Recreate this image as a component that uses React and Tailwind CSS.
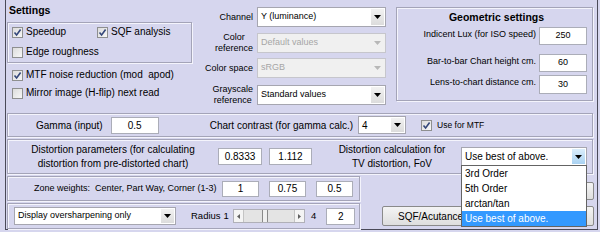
import React from 'react'

const FONT = "font-['Liberation_Sans',Arial,sans-serif]"

function Check({ checked = false }) {
  return (
    <span className="flex h-[11px] w-[11px] shrink-0 items-center justify-center border border-[#8e8f8f] bg-gradient-to-br from-[#dcdcdc] to-[#f7f7f7]">
      {checked && (
        <svg width="9" height="9" viewBox="0 0 9 9">
          <path d="M1.5 4.5 L3.6 7 L7.6 1.5" fill="none" stroke="#34477a" strokeWidth="1.6" />
        </svg>
      )}
    </span>
  )
}

function CheckRow({ checked, label, className = '' }) {
  return (
    <div className={`flex h-[12px] items-center gap-[3px] ${className}`}>
      <Check checked={checked} />
      <span className="leading-[12px] whitespace-nowrap">{label}</span>
    </div>
  )
}

function Arrow({ disabled = false, active = false }) {
  return (
    <span
      className={`flex h-full w-[13px] shrink-0 items-center justify-center ${
        active ? 'bg-gradient-to-b from-[#dbeefc] to-[#a9d2f2]' : disabled ? '' : 'bg-gradient-to-b from-[#f2f2f2] to-[#dcdcdc]'
      }`}
    >
      <svg width="7" height="4" viewBox="0 0 7 4">
        <path d="M0 0 H7 L3.5 4 Z" fill={disabled ? '#b8b8b8' : '#000'} />
      </svg>
    </span>
  )
}

function Select({ value, w, h = 'h-[20px]', disabled = false, active = false, text = 'text-[9px]' }) {
  return (
    <div
      className={`flex ${h} ${w} shrink-0 items-stretch border p-[1px] ${
        disabled ? 'border-[#c6c6cc] bg-[#f0f0f0] text-[#a6a6a6]' : 'border-[#a6a6b0] bg-white text-black'
      } ${active ? 'border-[#5a9ad6]' : ''}`}
    >
      <span className={`flex flex-1 items-center pl-[2px] ${text} whitespace-nowrap overflow-hidden`}>{value}</span>
      <Arrow disabled={disabled} active={active} />
    </div>
  )
}

function Field({ value, w, h = 'h-[18px]' }) {
  return (
    <div className={`flex ${h} ${w} shrink-0 items-center justify-center border border-[#abadb8] bg-white`}>
      {value}
    </div>
  )
}

const BOX = 'border border-[#a4a4b8] shadow-[inset_1px_1px_0_#f4f4fc,1px_1px_0_#f4f4fc]'

function LabelRow({ label, children, mt }) {
  return (
    <div className={`flex items-center ${mt}`}>
      <div className="flex w-[61px] justify-end">
        <span className="text-center leading-[11px]">{label}</span>
      </div>
      <div className="ml-[4px]">{children}</div>
    </div>
  )
}

export default function App() {
  return (
    <div className={`relative h-[232px] w-[600px] overflow-hidden bg-[#d6d6ee] text-[10px] text-black ${FONT}`}>
      <div className="ml-[5px] h-[230px] w-[593px] border-b border-l border-r border-[#4a4a58] pl-[1px] pr-[4px]">
        {/* top section */}
        <div className="flex h-[113px]">
          <div className="w-[185px]">
            <div className="h-[22px] pl-[2px] pt-[4px] text-[10.5px] font-bold leading-[13px]">Settings</div>
            <div className={`flex h-[41px] flex-col gap-[8px] pl-[4px] pt-[3px] ${BOX}`}>
              <div className="flex">
                <CheckRow checked label="Speedup" className="w-[85px]" />
                <CheckRow checked label="SQF analysis" />
              </div>
              <CheckRow label="Edge roughness" />
            </div>
            <div className="mt-[6px] flex flex-col gap-[6px] pl-[5px]">
              <CheckRow checked label={'MTF noise reduction (mod\u00a0 apod)'} />
              <CheckRow label="Mirror image (H-flip) next read" />
            </div>
          </div>

          <div className="w-[204px] pt-[7px] text-[9px]">
            <LabelRow label="Channel">
              <Select value="Y (luminance)" w="w-[129px]" />
            </LabelRow>
            <LabelRow label={<>Color<br />reference</>} mt="mt-[5px]">
              <Select value="Default values" w="w-[129px]" disabled />
            </LabelRow>
            <LabelRow label="Color space" mt="mt-[4px]">
              <Select value="sRGB" w="w-[129px]" disabled />
            </LabelRow>
            <LabelRow label={<>Grayscale<br />reference</>} mt="mt-[6px]">
              <Select value="Standard values" w="w-[129px]" />
            </LabelRow>
          </div>

          <div className={`mt-[7px] h-[94px] w-[197px] text-[9px] ${BOX}`}>
            <div className="pl-[4px] pt-[3px] text-center text-[10.5px] font-bold leading-[13px]">Geometric settings</div>
            <div className="mt-[3px] flex items-center justify-end gap-[3px] pr-[5px]">
              <span className="-mt-[3px]">Indicent Lux (for ISO speed)</span>
              <Field value="250" w="w-[48px]" />
            </div>
            <div className="mt-[9px] flex items-center justify-end gap-[3px] pr-[5px]">
              <span className="-mt-[3px]">Bar-to-bar Chart height cm.</span>
              <Field value="60" w="w-[48px]" />
            </div>
            <div className="mt-[3px] flex items-center justify-end gap-[3px] pr-[5px]">
              <span className="-mt-[3px]">Lens-to-chart distance cm.</span>
              <Field value="30" w="w-[48px]" h="h-[19px]" />
            </div>
          </div>
        </div>

        {/* gamma */}
        <div className={`flex h-[24px] items-center pl-[28px] ${BOX}`}>
          <span className="whitespace-nowrap">Gamma (input)</span>
          <div className="ml-[8px]">
            <Field value="0.5" w="w-[48px]" h="h-[17px]" />
          </div>
          <span className="ml-[51px] whitespace-nowrap">Chart contrast (for gamma calc.)</span>
          <div className="ml-[5px]">
            <Select value="4" w="w-[48px]" h="h-[18px]" text="text-[10px]" />
          </div>
          <div className="ml-[15px] flex items-center gap-[5px]">
            <Check checked />
            <span className="text-[8.5px]">Use for MTF</span>
          </div>
        </div>

        {/* distortion */}
        <div className={`mt-[2px] flex h-[35px] items-center ${BOX}`}>
          <div className="w-[210px] text-center leading-[14px]">
            Distortion parameters (for calculating
            <br />
            distortion from pre-distorted chart)
          </div>
          <Field value="0.8333" w="w-[44px]" h="h-[17px]" />
          <div className="ml-[7px]">
            <Field value="1.112" w="w-[43px]" h="h-[17px]" />
          </div>
          <div className="ml-[26px] w-[108px] text-center leading-[14px] whitespace-nowrap">
            Distortion calculation for
            <br />
            TV distortion, FoV
          </div>
          <div className="ml-[15px]">
            <Select value="Use best of above." w="w-[126px]" h="h-[19px]" text="text-[10px]" active />
          </div>
        </div>

        {/* bottom */}
        <div className="mt-[2px] flex">
          <div className="w-[353px]">
            <div className={`flex h-[25px] items-center ${BOX}`}>
              <span className="pl-[26px] text-[9px] whitespace-pre">Zone weights:  Center, Part Way, Corner (1-3)</span>
              <div className="ml-auto mr-[6px] flex gap-[10px]">
                <Field value="1" w="w-[37px]" h="h-[16px]" />
                <Field value="0.75" w="w-[37px]" h="h-[16px]" />
                <Field value="0.5" w="w-[37px]" h="h-[16px]" />
              </div>
            </div>
            <div className={`mt-[2px] flex h-[26px] items-center pl-[6px] ${BOX}`}>
              <Select value="Display oversharpening only" w="w-[162px]" h="h-[18px]" />
              <span className="ml-[15px] text-[9.5px]">Radius</span>
              <span className="ml-[3px] text-[9.5px]">1</span>
              <div className="ml-[4px] flex h-[14px] w-[72px] items-stretch border border-[#b0b0b8] bg-[#e4e4e4]">
                <span className="flex w-[10px] items-center justify-center bg-[#f4f4f4] border-r border-[#c4c4c4]">
                  <svg width="3" height="5" viewBox="0 0 3 5"><path d="M3 0 V5 L0 2.5 Z" fill="#606060" /></svg>
                </span>
                <span className="ml-[18px] w-[6px] border-x border-[#8a8a8a] bg-[#f0f0f0]" />
                <span className="flex-1" />
                <span className="flex w-[10px] items-center justify-center bg-[#f4f4f4] border-l border-[#c4c4c4]">
                  <svg width="3" height="5" viewBox="0 0 3 5"><path d="M0 0 V5 L3 2.5 Z" fill="#606060" /></svg>
                </span>
              </div>
              <span className="ml-[6px] text-[9.5px]">4</span>
              <div className="ml-[10px]">
                <Field value="2" w="w-[29px]" h="h-[17px]" />
              </div>
            </div>
          </div>
          <div className="flex flex-1 flex-col items-end">
            <div className="mt-[6px] -mr-[1px] h-[18px] w-[124px] rounded-[2px] border border-[#8a8a8a] bg-gradient-to-b from-[#f4f4f4] to-[#dedede]" />
            <div className="mt-[6px] -mr-[1px] flex h-[20px] w-[212px] items-center rounded-[2px] border border-[#8a8a8a] bg-gradient-to-b from-[#f4f4f4] to-[#dedede] pl-[15px] whitespace-nowrap">
              SQF/Acutance
            </div>
          </div>
        </div>
      </div>

      {/* open dropdown list */}
      <div className="absolute left-[461px] top-[165px] w-[126px] border border-[#646464] bg-white text-[10px]">
        <div className="flex h-[15px] items-center pl-[3px]">3rd Order</div>
        <div className="flex h-[15px] items-center pl-[3px]">5th Order</div>
        <div className="flex h-[15px] items-center pl-[3px]">arctan/tan</div>
        <div className="flex h-[15px] items-center bg-[#3399ff] pl-[3px] text-white">Use best of above.</div>
      </div>
    </div>
  )
}
